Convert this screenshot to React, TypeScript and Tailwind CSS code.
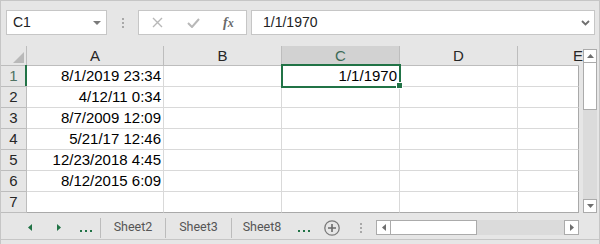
import React from "react";

const GREEN = "#217346";

function Tri({ dir, color, w, h }: { dir: "up" | "down" | "left" | "right"; color: string; w: number; h: number }) {
  let pts = "";
  if (dir === "down") pts = `0,0 ${w},0 ${w / 2},${h}`;
  if (dir === "up") pts = `0,${h} ${w},${h} ${w / 2},0`;
  if (dir === "left") pts = `${w},0 ${w},${h} 0,${h / 2}`;
  if (dir === "right") pts = `0,0 0,${h} ${w},${h / 2}`;
  return (
    <svg width={w} height={h} viewBox={`0 0 ${w} ${h}`} className="block">
      <polygon points={pts} fill={color} />
    </svg>
  );
}

function VDots() {
  return (
    <div className="flex flex-col gap-[2px]">
      <div className="w-[2px] h-[2px] bg-[#a8a8a8]" />
      <div className="w-[2px] h-[2px] bg-[#a8a8a8]" />
      <div className="w-[2px] h-[2px] bg-[#a8a8a8]" />
    </div>
  );
}

function GreenDots() {
  return (
    <div className="flex items-end gap-[3px] h-[10px] pb-[1px]">
      <div className="w-[2px] h-[2px] bg-[#217346]" />
      <div className="w-[2px] h-[2px] bg-[#217346]" />
      <div className="w-[2px] h-[2px] bg-[#217346]" />
    </div>
  );
}

export default function App() {
  const cols = ["A", "B", "C", "D", "E"];
  const data: string[][] = [
    ["8/1/2019 23:34", "", "1/1/1970", "", ""],
    ["4/12/11 0:34", "", "", "", ""],
    ["8/7/2009 12:09", "", "", "", ""],
    ["5/21/17 12:46", "", "", "", ""],
    ["12/23/2018 4:45", "", "", "", ""],
    ["8/12/2015 6:09", "", "", "", ""],
    ["", "", "", "", ""],
  ];

  return (
    <div
      className="w-[600px] h-[244px] bg-[#e6e6e6] border-t border-l border-r border-[#c6c6c6] flex flex-col overflow-hidden"
      style={{ fontFamily: '"Liberation Sans", Arial, sans-serif' }}
    >
      {/* Formula bar */}
      <div className="h-[45px] shrink-0 pt-[9px] pl-[5px] flex items-start">
        <div className="w-[101px] h-[25px] bg-white border border-[#c6c6c6] flex items-center pl-[6px] pr-[5px]">
          <span className="text-[14px] text-[#222]">C1</span>
          <div className="ml-auto">
            <Tri dir="down" color="#7a7a7a" w={8} h={4} />
          </div>
        </div>
        <div className="w-[31px] h-[25px] flex items-center justify-center">
          <VDots />
        </div>
        <div className="w-[109px] h-[25px] bg-white border border-[#c6c6c6] flex items-center pl-[13px]">
          <svg width="11" height="11" viewBox="0 0 11 11" className="block">
            <path d="M1 1 L10 10 M10 1 L1 10" stroke="#b8b8b8" strokeWidth="1.4" fill="none" />
          </svg>
          <svg width="13" height="10" viewBox="0 0 13 10" className="block ml-[24px]">
            <path d="M1 5 L5 9 L12 1" stroke="#b8b8b8" strokeWidth="2" fill="none" />
          </svg>
          <span
            className="ml-[23px] text-[14px] italic font-bold text-[#6a6a6a] leading-none"
            style={{ fontFamily: '"Liberation Serif", "Times New Roman", serif' }}
          >
            f<span className="text-[12px]">x</span>
          </span>
        </div>
        <div className="ml-[4px] w-[344px] h-[25px] bg-white border border-[#c6c6c6] flex items-center pl-[11px] pr-[4px]">
          <span className="text-[14px] text-[#222]">1/1/1970</span>
          <svg width="9" height="6" viewBox="0 0 9 6" className="block ml-auto">
            <path d="M1 1 L4.5 4.5 L8 1" stroke="#6f6f6f" strokeWidth="1.8" fill="none" />
          </svg>
        </div>
      </div>

      {/* Grid area */}
      <div className="h-[167px] shrink-0 flex">
        <div className="relative w-[578px]">
          <div className="grid grid-cols-[26px_137px_118px_118px_118px_61px] grid-rows-[20px_repeat(7,21px)] text-[15px]">
            {/* corner */}
            <div className="border-r border-b border-[#bdbdbd] flex items-end justify-end pr-[2px] pb-[2px]">
              <svg width="11" height="11" viewBox="0 0 11 11" className="block">
                <polygon points="11,0 11,11 0,11" fill="#b9b9b9" />
              </svg>
            </div>
            {cols.map((c, i) => (
              <div
                key={c}
                className={
                  "border-b border-[#bdbdbd] flex justify-center leading-[19px] " +
                  (i === 4 ? "border-r-0 " : "border-r ") +
                  (c === "C" ? "bg-[#d2d2d2] text-[#3d6b57]" : "text-[#262626]")
                }
              >
                {c === "E" ? <span className="ml-auto mr-[-4px]">E</span> : c}
              </div>
            ))}
            {data.map((row, r) => (
              <React.Fragment key={r}>
                <div
                  className={
                    "border-r border-b border-[#bdbdbd] flex justify-center leading-[20px] " +
                    (r === 0 ? "text-[#4f7262]" : "text-[#262626]")
                  }
                >
                  {r + 1}
                </div>
                {row.map((v, ci) => (
                  <div
                    key={ci}
                    className={
                      "bg-white border-b border-r flex justify-end pr-[2px] leading-[20px] text-black whitespace-nowrap " +
                      (ci === 4 ? "border-r-[#a9a9a9] " : "border-r-[#d9d9d9] ") +
                      (r === 6 ? "border-b-[#a9a9a9]" : "border-b-[#d9d9d9]")
                    }
                  >
                    {v}
                  </div>
                ))}
              </React.Fragment>
            ))}
          </div>
          {/* row 1 header green bar */}
          <div className="absolute left-[24px] top-[19px] w-[2px] h-[21px] bg-[#217346]" />
          {/* selection */}
          <div className="absolute left-[280px] top-[18px] w-[120px] h-[24px] border-2 border-[#217346]" />
          <div className="absolute left-[395px] top-[36px] w-[7px] h-[7px] bg-white p-[1px]">
            <div className="w-[5px] h-[5px]" style={{ background: GREEN }} />
          </div>
        </div>
        {/* vertical scrollbar */}
        <div className="ml-[4px] w-[14px] pt-[3px] flex flex-col">
          <div className="flex-1 flex flex-col bg-[#dbdbdb]">
            <div className="h-[14px] bg-white border border-[#ababab] flex items-center justify-center">
              <Tri dir="up" color="#6f6f6f" w={7} h={4} />
            </div>
            <div className="h-[47px] bg-white border border-t-0 border-[#ababab]" />
            <div className="flex-1" />
            <div className="h-[14px] bg-white border border-[#ababab] flex items-center justify-center">
              <Tri dir="down" color="#6f6f6f" w={7} h={4} />
            </div>
          </div>
        </div>
      </div>

      {/* Sheet tabs */}
      <div className="h-[26px] shrink-0 pt-[3px] flex items-center">
        <div className="ml-[27px]">
          <Tri dir="left" color={GREEN} w={4} h={7} />
        </div>
        <div className="ml-[25px]">
          <Tri dir="right" color={GREEN} w={4} h={7} />
        </div>
        <div className="ml-[19px]">
          <GreenDots />
        </div>
        <div className="ml-[8px] w-[1px] h-[20px] bg-[#bcbcbc]" />
        <div className="w-[64px] flex justify-center text-[#555]" style={{ fontFamily: "Roboto, sans-serif", fontSize: "12.5px" }}>
          Sheet2
        </div>
        <div className="w-[1px] h-[20px] bg-[#bcbcbc]" />
        <div className="w-[65px] flex justify-center text-[#555]" style={{ fontFamily: "Roboto, sans-serif", fontSize: "12.5px" }}>
          Sheet3
        </div>
        <div className="w-[1px] h-[20px] bg-[#bcbcbc]" />
        <div className="w-[60px] flex justify-center text-[#555]" style={{ fontFamily: "Roboto, sans-serif", fontSize: "12.5px" }}>
          Sheet8
        </div>
        <div className="ml-[6px]">
          <GreenDots />
        </div>
        <svg width="16" height="16" viewBox="0 0 16 16" className="block ml-[14px]">
          <circle cx="8" cy="8" r="7.2" stroke="#7a7a7a" strokeWidth="1.3" fill="none" />
          <path d="M8 4 V12 M4 8 H12" stroke="#6a6a6a" strokeWidth="1.6" />
        </svg>
        <div className="ml-[20px]">
          <VDots />
        </div>
        <div className="ml-[14px] w-[203px] h-[15px] flex bg-[#dbdbdb]">
          <div className="w-[15px] h-[15px] bg-white border border-[#ababab] flex items-center justify-center">
            <Tri dir="left" color="#6f6f6f" w={4} h={7} />
          </div>
          <div className="w-[86px] h-[15px] bg-white border border-l-0 border-[#ababab]" />
          <div className="flex-1" />
          <div className="w-[15px] h-[15px] bg-white border border-[#ababab] flex items-center justify-center">
            <Tri dir="right" color="#6f6f6f" w={4} h={7} />
          </div>
        </div>
      </div>
      <div className="h-[1px] bg-[#c6c6c6] shrink-0" />
      <div className="flex-1" />
    </div>
  );
}
